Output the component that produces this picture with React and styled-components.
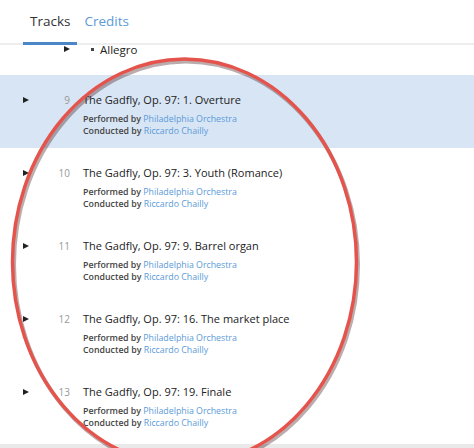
import React from 'react';
import styled, { createGlobalStyle } from 'styled-components';

const GlobalStyle = createGlobalStyle`
  html, body {
    margin: 0;
    padding: 0;
    background: #fff;
  }
  body {
    font-family: "Open Sans", "Noto Sans", sans-serif;
    color: #222;
    overflow: hidden;
  }
`;

const tracks = [
  { no: 9, title: 'The Gadfly, Op. 97: 1. Overture', active: true },
  { no: 10, title: 'The Gadfly, Op. 97: 3. Youth (Romance)' },
  { no: 11, title: 'The Gadfly, Op. 97: 9. Barrel organ' },
  { no: 12, title: 'The Gadfly, Op. 97: 16. The market place' },
  { no: 13, title: 'The Gadfly, Op. 97: 19. Finale' },
];

const Page = styled.div`
  position: relative;
  width: 474px;
  height: 448px;
  overflow: hidden;
`;

const TabBar = styled.div`
  display: flex;
  padding-left: 23px;
  height: 43px;
  border-bottom: 2px solid #eeeeee;
`;

const Tab = styled.div`
  display: flex;
  align-items: center;
  justify-content: center;
  padding: 0 7px;
  font-size: 13.5px;
  color: ${p => (p.$active ? '#333' : '#5b9bd8')};
  border-bottom: 3px solid ${p => (p.$active ? '#4a86c8' : 'transparent')};
  margin-bottom: -2px;
`;

const SubRow = styled.div`
  display: flex;
  align-items: center;
  height: 28px;
  padding-left: 64px;
  font-size: 11.5px;
  margin-top: -10px;
`;

const Bullet = styled.span`
  width: 3px;
  height: 3px;
  background: #444;
  margin: 0 6px 0 21px;
`;

const List = styled.div`
  display: flex;
  flex-direction: column;
  margin-top: 12px;
`;

const Row = styled.div`
  display: grid;
  grid-template-columns: 70px 1fr;
  height: 73px;
  padding-top: 17px;
  box-sizing: border-box;
  background: ${p => (p.$active ? '#d8e5f5' : 'transparent')};
`;

const Lead = styled.div`
  display: flex;
  align-items: center;
  justify-content: space-between;
  height: 16px;
  padding: 0 0 0 23px;
`;

const Play = styled.span`
  width: 0;
  height: 0;
  border-top: 3.5px solid transparent;
  border-bottom: 3.5px solid transparent;
  border-left: 6px solid #222;
`;

const Num = styled.span`
  font-size: 10px;
  color: #999;
`;

const Body = styled.div`
  display: flex;
  flex-direction: column;
  padding-left: 13px;
`;

const Title = styled.div`
  font-size: 11px;
  line-height: 16px;
  color: #222;
  margin-bottom: 5px;
`;

const Meta = styled.div`
  font-size: 8.8px;
  line-height: 12px;
  font-weight: 600;
  color: #444;
`;

const Link = styled.span`
  color: #5b9bd8;
  font-weight: 500;
`;

const Footer = styled.div`
  position: absolute;
  left: 0;
  right: 0;
  bottom: 0;
  height: 4px;
  background: #e9e9e9;
`;

const Mark = styled.svg`
  position: absolute;
  left: 0;
  top: 0;
  pointer-events: none;
`;

export default function App() {
  return (
    <Page>
      <GlobalStyle />
      <TabBar>
        <Tab $active>Tracks</Tab>
        <Tab>Credits</Tab>
      </TabBar>
      <SubRow>
        <Play />
        <Bullet />
        Allegro
      </SubRow>
      <List>
        {tracks.map(t => (
          <Row key={t.no} $active={t.active}>
            <Lead>
              <Play />
              <Num>{t.no}</Num>
            </Lead>
            <Body>
              <Title>{t.title}</Title>
              <Meta>
                Performed by <Link>Philadelphia Orchestra</Link>
              </Meta>
              <Meta>
                Conducted by <Link>Riccardo Chailly</Link>
              </Meta>
            </Body>
          </Row>
        ))}
      </List>
      <Footer />
      <Mark width="474" height="448" viewBox="0 0 474 448">
        <ellipse cx="185" cy="263" rx="172" ry="203" fill="none" stroke="rgba(60,20,20,0.35)" strokeWidth="4" transform="translate(1 1.5)" />
        <ellipse cx="184.5" cy="262" rx="172" ry="203" fill="none" stroke="#e5544c" strokeWidth="3.5" />
      </Mark>
    </Page>
  );
}
